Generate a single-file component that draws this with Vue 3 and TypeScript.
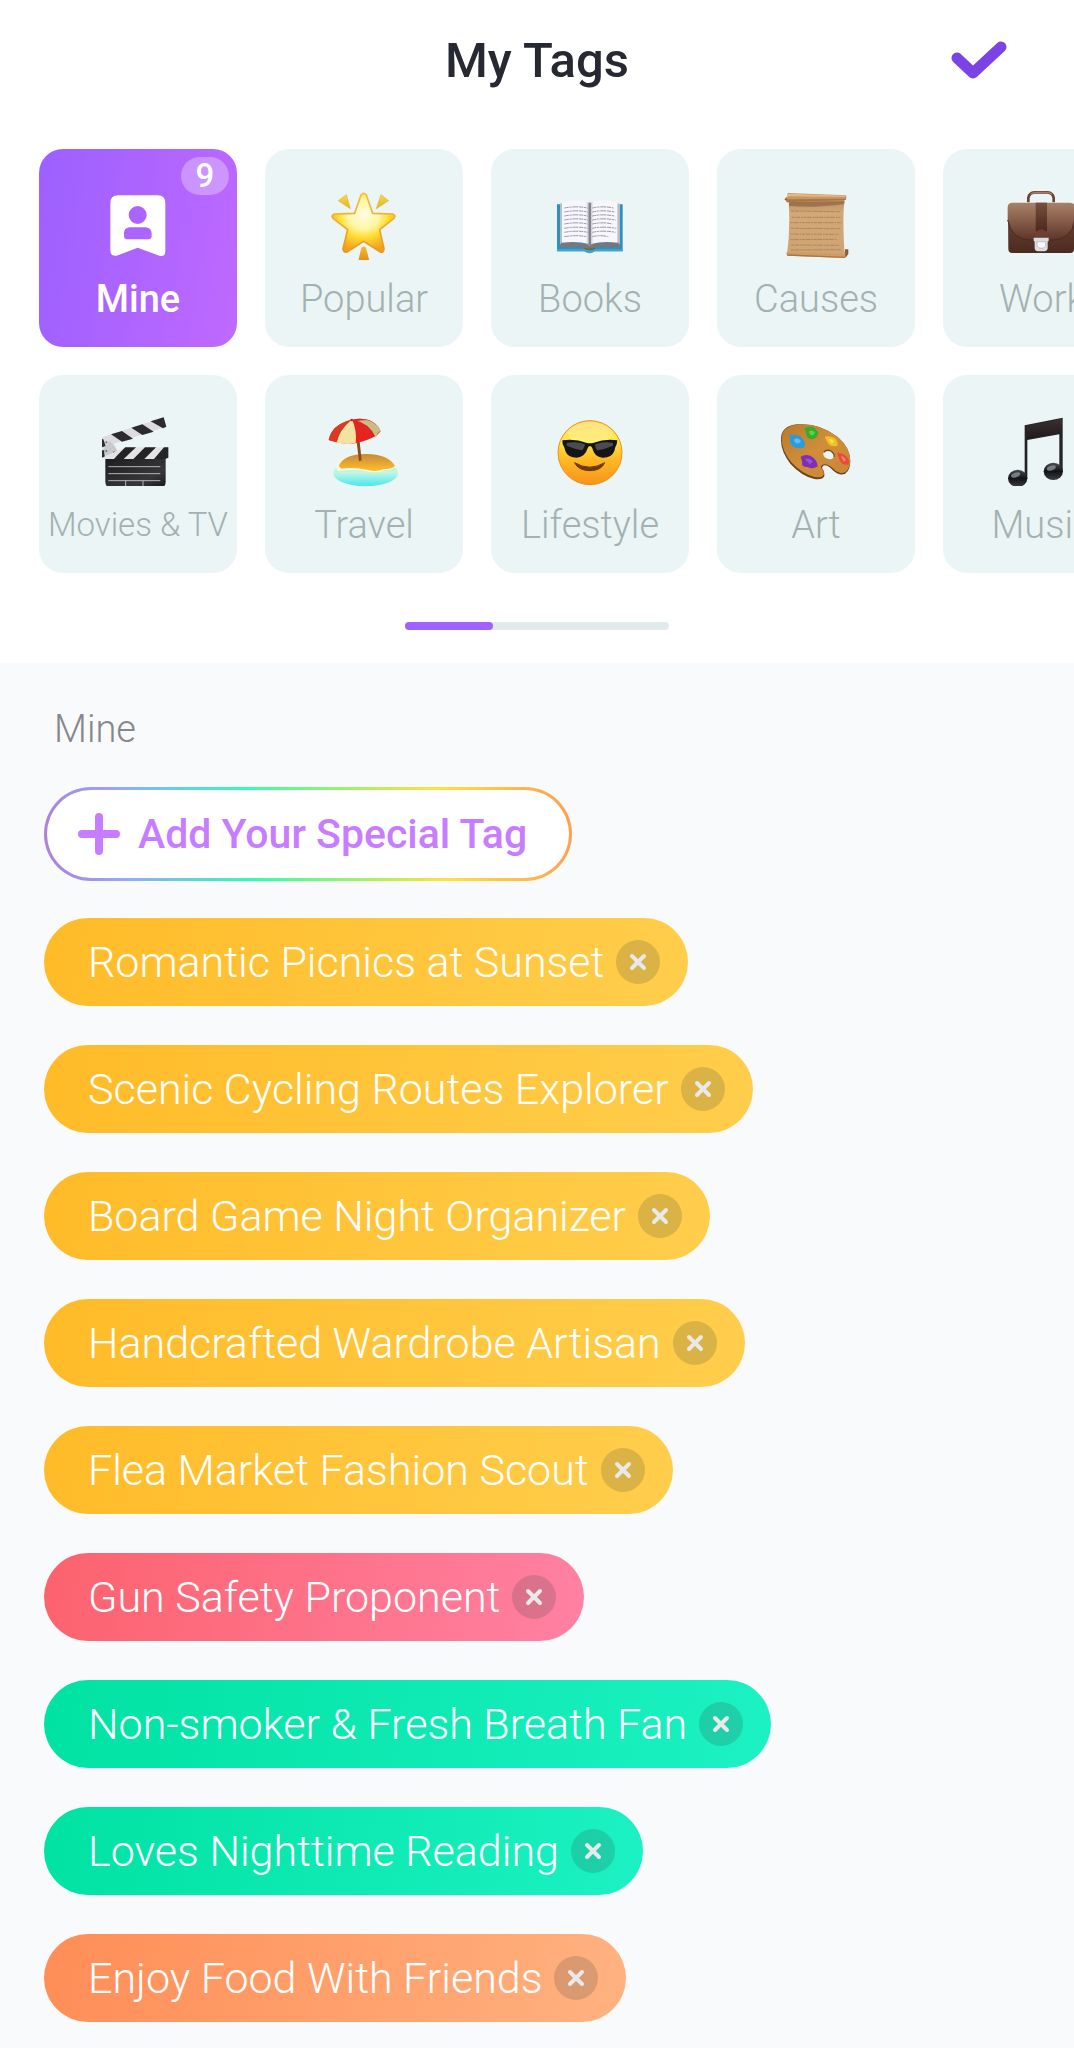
<script setup lang="ts">
import { computed, ref } from 'vue'

interface Category {
  id: string
  label: string
  viewBox: string
  compact?: boolean
}

interface Tag {
  text: string
  tone: 'yellow' | 'pink' | 'green' | 'orange'
}

// Listed column by column, as the two-row carousel fills them.
const categories: Category[] = [
  { id: 'mine', label: 'Mine', viewBox: '216 144 216 216' },
  { id: 'movies', label: 'Movies & TV', viewBox: '216 131 216 216', compact: true },
  { id: 'popular', label: 'Popular', viewBox: '203 144 216 216' },
  { id: 'travel', label: 'Travel', viewBox: '203 131 216 216' },
  { id: 'books', label: 'Books', viewBox: '221 144 216 216' },
  { id: 'lifestyle', label: 'Lifestyle', viewBox: '221 131 216 216' },
  { id: 'causes', label: 'Causes', viewBox: '209 144 216 216' },
  { id: 'art', label: 'Art', viewBox: '209 131 216 216' },
  { id: 'work', label: 'Work', viewBox: '886 144 216 216' },
  { id: 'music', label: 'Music', viewBox: '886 131 216 216' },
]

const active = ref('mine')
const activeLabel = computed(() => categories.find((c) => c.id === active.value)?.label)

const tags = ref<Tag[]>([
  { text: 'Romantic Picnics at Sunset', tone: 'yellow' },
  { text: 'Scenic Cycling Routes Explorer', tone: 'yellow' },
  { text: 'Board Game Night Organizer', tone: 'yellow' },
  { text: 'Handcrafted Wardrobe Artisan', tone: 'yellow' },
  { text: 'Flea Market Fashion Scout', tone: 'yellow' },
  { text: 'Gun Safety Proponent', tone: 'pink' },
  { text: 'Non-smoker & Fresh Breath Fan', tone: 'green' },
  { text: 'Loves Nighttime Reading', tone: 'green' },
  { text: 'Enjoy Food With Friends', tone: 'orange' },
])

function removeTag(index: number) {
  tags.value.splice(index, 1)
}
</script>

<template>
  <div class="page">
    <header class="header">
      <h1 class="title">My Tags</h1>
      <button class="confirm" type="button" aria-label="Done">
        <svg viewBox="0 0 56 40" aria-hidden="true">
          <path d="M6 17 L22 32 L50 6" fill="none" stroke="currentColor" stroke-width="11" stroke-linecap="round" stroke-linejoin="round" />
        </svg>
      </button>
    </header>

    <nav class="categories" aria-label="Tag categories">
      <button
        v-for="c in categories"
        :key="c.id"
        type="button"
        class="tile"
        :class="{ active: active === c.id }"
        @click="active = c.id"
      >
        <svg class="icon" :viewBox="c.viewBox" aria-hidden="true">
          <g v-if="c.id === 'mine'">
            <path
              fill="currentColor"
              fill-rule="evenodd"
              d="M264 166H383Q406 166 406 190V333Q406 352 388 347L323 323L260 347Q241 350 241 331V190Q241 166 264 166ZM323 198A27 27 0 1 0 323 252A27 27 0 1 0 323 198ZM298 262Q282 264 282 280V289Q282 298 291 298H356Q365 298 365 289V280Q364 264 348 262Z"
            />
          </g>

          <g v-else-if="c.id === 'popular'">
            <g fill="url(#rayTop)" stroke="#e3b62a" stroke-width="2" stroke-linejoin="round">
              <path d="M234 182L258 164L270 206Z" />
              <path d="M385 182L362 164L348 206Z" />
            </g>
            <path d="M303 323Q310 316 317 323L327 362H294Z" fill="url(#rayBottom)" />
            <path
              d="M302 165Q310 155 318 165L337 220L397 222Q408 226 401 235L358 269L371 326Q370 340 358 335L310 304L262 335Q249 340 248 326L262 269L218 235Q211 226 222 222L283 220Z"
              fill="url(#star)"
              stroke="url(#starEdge)"
              stroke-width="5"
              stroke-linejoin="round"
            />
          </g>

          <g v-else-if="c.id === 'books'">
            <path d="M230 193H427V334H344Q328 345 312 334H230Z" fill="#2f8fbd" />
            <path d="M230 327H427V334H344Q328 345 312 334H230Z" fill="#3fa4cf" />
            <path d="M312 321H344V327Q328 335 312 327Z" fill="#6b6b2c" />
            <path d="M239 312L246 304L328 312L411 304L419 312V322H346Q328 330 311 322H239Z" fill="#77777d" />
            <path d="M239 192L245 188V306L239 314ZM419 192L412 188V306L419 314Z" fill="#b9bcc4" />
            <path d="M245 188Q292 176 326 186V312Q290 302 245 308Z" fill="#f7f7fb" />
            <path d="M332 186Q366 176 412 188V308Q368 302 332 312Z" fill="#f7f7fb" />
            <path d="M316 183L328 190L340 183V311L328 318L316 311Z" fill="url(#bookFold)" />
            <path d="M325 188H332V316H325Z" fill="#83838c" />
            <g fill="none" stroke="#9a9aa8" stroke-width="3" stroke-dasharray="13 2 7 2 18 2">
              <path d="M252 204Q290 197 322 204M252 216Q290 209 322 216M252 228Q290 221 322 228M252 240Q290 233 322 240M252 252Q290 245 322 252M252 265Q290 258 322 265M252 277Q290 270 322 277M252 290Q290 284 318 290" />
              <path d="M336 204Q366 197 400 204M336 216Q366 209 404 216M336 228Q366 221 402 228M336 240Q366 233 406 240M336 252Q366 245 396 252M336 265Q366 258 408 265M336 277Q366 270 406 277M336 290Q360 284 384 290" />
            </g>
          </g>

          <g v-else-if="c.id === 'causes'">
            <path d="M235 180L403 176Q396 230 402 330L408 350L230 346Q240 270 235 180Z" fill="url(#parchment)" />
            <path d="M236 186L403 184L402 192Q310 205 236 198Z" fill="#7d5836" opacity=".55" />
            <g fill="none" stroke="#97704a" stroke-width="3" stroke-dasharray="9 2 14 3 5 2" opacity=".6">
              <path d="M242 213L388 215M244 232L390 232M240 248L394 248M242 265L390 266M240 282L384 283M240 299L380 298M242 315L386 316M242 330L392 329" />
            </g>
            <path d="M232 159L407 166Q411 172 407 179L230 187Q223 182 227 171L232 170Z" fill="#c9965f" />
            <path d="M232 161L407 167L406 171L231 169Z" fill="#e2b888" />
            <path d="M227 178L406 176L406 180L230 187Z" fill="#a97746" />
            <path d="M230 335L404 341L404 354L231 347Q226 342 230 335Z" fill="#cd9d69" />
            <path d="M230 343L404 350V354L231 347Z" fill="#a97746" />
            <path d="M404 328L414 328V342L405 354Z" fill="#8a5a30" />
            <circle cx="226" cy="178" r="3" fill="#8a5a30" />
          </g>

          <g v-else-if="c.id === 'work'">
            <path d="M953 187V174Q955 158 972 157H1010Q1027 158 1029 174V187" fill="none" stroke="#6b4234" stroke-width="8" />
            <path d="M960 163Q966 157 978 157H1006Q1018 157 1024 163" fill="none" stroke="#a77c67" stroke-width="4" />
            <path d="M892 230H1090V326Q1090 339 1079 339H905Q893 339 893 326Z" fill="url(#caseBody)" />
            <path d="M905 188H1078Q1092 188 1092 202V240Q1084 300 1020 301H966Q902 300 891 240V202Q891 188 905 188Z" fill="url(#caseFlap)" />
            <path d="M891 240Q902 300 966 301H1020Q1084 300 1092 240" fill="none" stroke="#4c2a20" stroke-width="3" />
            <path d="M975 188H1009V274H975Z" fill="url(#strap)" />
            <path d="M974 290Q976 268 992 268Q1008 268 1010 290Z" fill="#6e4032" />
            <path d="M969 293H1014V304H1011V325Q1010 334 1000 334H982Q973 334 972 325V304H969Z" fill="#dcdfe2" />
            <path d="M979 305H1005V318Q1003 325 992 325Q980 325 979 318Z" fill="#f7f8f9" stroke="#a9adb2" stroke-width="2" />
          </g>

          <g v-else-if="c.id === 'movies'">
            <path d="M209 203L401 141L409 169L240 224Q262 232 266 252V262H218V228Z" fill="#dcdcde" />
            <g fill="#2b2b2d">
              <path d="M243 192L276 182L309 205L276 214ZM304 172L337 162L371 184L337 194ZM362 153L401 141L409 169L399 174Z" />
              <path d="M207 203L220 207L227 227L217 231ZM216 240H224V262H216Z" />
            </g>
            <path d="M223 230L238 212Q256 222 263 246L236 256L223 252Z" fill="#c9cacd" />
            <circle cx="229" cy="242" r="3" fill="#6d6d70" />
            <circle cx="252" cy="246" r="3" fill="#6d6d70" />
            <circle cx="229" cy="216" r="3" fill="#6d6d70" />
            <path d="M226 262H407V334Q407 353 388 353H246Q226 353 226 334Z" fill="url(#slate)" />
            <path d="M216 262L286 231H415V262L406 266H226Z" fill="#e3e3e5" />
            <g fill="#242426">
              <path d="M262 255L286 231H318L281 266H252ZM345 231H378L343 266H310ZM402 231H415V262L406 266H372Z" />
            </g>
            <path d="M235 289H391M235 310H391M235 331H391M287 331V347M339 331V347" fill="none" stroke="#b5b5b8" stroke-width="3" />
          </g>

          <g v-else-if="c.id === 'travel'">
            <ellipse cx="316" cy="309" rx="97" ry="39" fill="url(#sea)" />
            <path d="M226 290Q236 250 318 250Q394 252 406 292Q390 300 372 299Q356 310 326 304Q290 294 232 302Z" fill="#fff8dc" />
            <path d="M235 287Q250 250 320 251Q386 252 404 288Q392 298 371 296Q350 306 322 299Q280 290 244 295Z" fill="url(#sand)" />
            <path d="M289 215L298 214L304 270L296 273Z" fill="#8a4b22" />
            <path d="M205 209Q214 164 270 149Q340 134 361 183L348 196Q330 207 286 219Q260 226 205 209Z" fill="#e2261f" />
            <path d="M272 150Q236 180 229 216Q252 224 286 219Q290 180 276 150Z" fill="#f6e2a0" />
            <path d="M282 149Q326 158 346 200L348 196Q352 186 361 181Q345 148 300 146Z" fill="#c9bd87" />
            <path d="M278 149Q300 141 322 150Q300 148 290 153Z" fill="#e2261f" />
            <path d="M205 209Q214 164 270 149Q236 180 229 216Z" fill="#d93a23" />
            <circle cx="274" cy="149" r="4" fill="#c9231c" />
          </g>

          <g v-else-if="c.id === 'lifestyle'">
            <circle cx="329" cy="247" r="96" fill="url(#face)" stroke="#ec8f1c" stroke-width="3" />
            <ellipse cx="329" cy="190" rx="66" ry="34" fill="#ffffff" opacity=".25" />
            <path d="M246 210Q286 205 317 217Q329 221 341 217Q372 205 411 210L409 222Q404 230 402 242Q394 263 366 262Q342 260 336 234Q333 227 329 227Q325 227 322 234Q314 260 290 262Q262 262 255 242Q253 230 247 222Z" fill="#151517" />
            <path d="M259 218Q288 212 314 222Q312 236 304 240Q284 236 259 226ZM398 218Q370 212 344 222Q345 236 352 240Q374 236 398 226Z" fill="#6f7276" opacity=".6" />
            <path d="M283 277Q328 304 373 277Q364 300 329 301Q293 300 283 277Z" fill="#6d3a0d" stroke="#6d3a0d" stroke-width="3" stroke-linejoin="round" />
          </g>

          <g v-else-if="c.id === 'art'">
            <path d="M212 210Q210 166 262 162Q330 158 382 200Q420 232 420 275Q416 318 388 312Q374 308 360 292Q340 278 335 292Q344 306 342 318Q336 330 312 326Q272 316 240 280Q212 244 212 210Z" fill="#6e421a" />
            <path d="M214 207Q214 166 266 162Q332 160 382 200Q421 234 420 270Q416 312 390 308Q376 304 362 289Q338 274 331 291Q342 302 340 313Q336 324 312 320Q274 310 243 276Q215 242 214 207Z" fill="url(#palette)" />
            <ellipse cx="355" cy="253" rx="17" ry="13" fill="#ebf5f6" transform="rotate(25 355 253)" />
            <path d="M340 246Q348 236 362 242Q374 252 371 260" fill="none" stroke="#7a4a1c" stroke-width="4" />
            <path d="M283 174Q294 166 312 172L324 186Q322 206 304 207Q290 206 288 192Z" fill="#34ad2c" />
            <path d="M296 184Q304 176 314 186Q310 198 300 194Z" fill="#5fd04a" />
            <path d="M236 193Q248 190 270 198Q288 214 283 230Q266 238 246 228Q236 216 240 206Z" fill="#2c9bd9" />
            <path d="M250 208Q262 200 272 212Q268 222 256 218Z" fill="#63bdec" />
            <path d="M343 200Q352 194 372 202Q384 212 381 226Q364 232 354 220Z" fill="#f1c21c" />
            <path d="M355 206Q366 204 372 214L364 220Z" fill="#f9dd5e" />
            <path d="M380 248Q398 246 412 262Q420 276 414 283Q398 286 389 272Z" fill="#ec4a3b" />
            <path d="M392 258Q402 258 407 270L400 274Z" fill="#f98175" />
            <path d="M271 260Q282 250 300 256Q322 268 322 288Q306 298 292 290Q270 290 276 276Z" fill="#7e2fb6" />
            <path d="M284 266Q298 260 308 274L298 282Z" fill="#9b50cf" />
          </g>

          <g v-else>
            <path d="M942 165L1056 142V300H1046V192L950 209V325H942Z" fill="#232326" />
            <path d="M944 167L1054 145V186L950 206Z" fill="url(#beam)" />
            <ellipse cx="921" cy="324" rx="29" ry="26" fill="url(#note)" />
            <ellipse cx="1028" cy="303" rx="29" ry="26" fill="url(#note)" />
            <ellipse cx="915" cy="314" rx="14" ry="7" fill="#9aa0a8" opacity=".7" transform="rotate(-20 915 314)" />
            <ellipse cx="1022" cy="293" rx="14" ry="7" fill="#9aa0a8" opacity=".7" transform="rotate(-20 1022 293)" />
          </g>
        </svg>
        <span class="label" :class="{ compact: c.compact }">{{ c.label }}</span>
        <span v-if="c.id === 'mine'" class="badge">{{ tags.length }}</span>
      </button>
    </nav>

    <div class="scroll-track" aria-hidden="true"><div class="scroll-thumb"></div></div>

    <main class="panel">
      <h2 class="section-title">{{ activeLabel }}</h2>
      <button class="add" type="button">
        <svg viewBox="0 0 42 42" aria-hidden="true">
          <path d="M21 4V38M4 21H38" fill="none" stroke="currentColor" stroke-width="8" stroke-linecap="round" />
        </svg>
        <span>Add Your Special Tag</span>
      </button>
      <ul class="tags">
        <li v-for="(tag, i) in tags" :key="tag.text" class="tag" :class="tag.tone">
          <span>{{ tag.text }}</span>
          <button class="remove" type="button" :aria-label="'Remove ' + tag.text" @click="removeTag(i)">
            <svg viewBox="0 0 44 44" aria-hidden="true">
              <path d="M16 16L28 28M28 16L16 28" fill="none" stroke="#e9e9e9" stroke-width="4" stroke-linecap="round" />
            </svg>
          </button>
        </li>
      </ul>
    </main>

    <svg class="defs" width="0" height="0" aria-hidden="true">
      <defs>
        <radialGradient id="star" cx=".5" cy=".36" r=".62">
          <stop offset="0" stop-color="#fffce0" />
          <stop offset=".4" stop-color="#fff6a6" />
          <stop offset=".62" stop-color="#ffdf35" />
          <stop offset="1" stop-color="#f2a01b" />
        </radialGradient>
        <linearGradient id="starEdge" x2="0" y2="1">
          <stop offset="0" stop-color="#efc03e" />
          <stop offset="1" stop-color="#e8971c" />
        </linearGradient>
        <linearGradient id="rayTop" x2="0" y2="1">
          <stop offset="0" stop-color="#f4da55" />
          <stop offset="1" stop-color="#e6b221" />
        </linearGradient>
        <linearGradient id="rayBottom" x2="0" y2="1">
          <stop offset="0" stop-color="#f6bd2f" />
          <stop offset="1" stop-color="#e48d12" />
        </linearGradient>
        <linearGradient id="bookFold">
          <stop offset="0" stop-color="#c4c4cc" stop-opacity="0" />
          <stop offset=".5" stop-color="#a2a2ab" />
          <stop offset="1" stop-color="#c4c4cc" stop-opacity="0" />
        </linearGradient>
        <linearGradient id="parchment" x2="0" y2="1">
          <stop offset="0" stop-color="#b98d60" />
          <stop offset=".25" stop-color="#d2a878" />
          <stop offset="1" stop-color="#cfa473" />
        </linearGradient>
        <linearGradient id="caseBody" x2="0" y2="1">
          <stop offset="0" stop-color="#6a4032" />
          <stop offset="1" stop-color="#4c2a20" />
        </linearGradient>
        <linearGradient id="caseFlap" x2="0" y2="1">
          <stop offset="0" stop-color="#a98169" />
          <stop offset=".5" stop-color="#855b48" />
          <stop offset="1" stop-color="#5b3529" />
        </linearGradient>
        <linearGradient id="strap" x2="0" y2="1">
          <stop offset="0" stop-color="#76503d" />
          <stop offset="1" stop-color="#4b281e" />
        </linearGradient>
        <linearGradient id="slate" x2="1" y2="1">
          <stop offset="0" stop-color="#1d1d1f" />
          <stop offset=".7" stop-color="#37373a" />
          <stop offset="1" stop-color="#18181a" />
        </linearGradient>
        <linearGradient id="sea" x2="0" y2="1">
          <stop offset="0" stop-color="#7fdfe6" />
          <stop offset=".45" stop-color="#c6f7e2" />
          <stop offset="1" stop-color="#45e6f0" />
        </linearGradient>
        <linearGradient id="sand" x2="0" y2="1">
          <stop offset="0" stop-color="#c58a3a" />
          <stop offset="1" stop-color="#ffbf2c" />
        </linearGradient>
        <linearGradient id="face" x2="0" y2="1">
          <stop offset="0" stop-color="#ffd95a" />
          <stop offset=".3" stop-color="#ffe94a" />
          <stop offset=".6" stop-color="#ffba24" />
          <stop offset="1" stop-color="#f8931a" />
        </linearGradient>
        <linearGradient id="palette" x2="1" y2="1">
          <stop offset="0" stop-color="#b87a2c" />
          <stop offset=".5" stop-color="#d08e3a" />
          <stop offset="1" stop-color="#c98534" />
        </linearGradient>
        <linearGradient id="beam" x2="0" y2="1">
          <stop offset="0" stop-color="#3a3031" />
          <stop offset="1" stop-color="#1f191a" />
        </linearGradient>
        <linearGradient id="note" x2="0" y2="1">
          <stop offset="0" stop-color="#4a4f55" />
          <stop offset=".5" stop-color="#121315" />
          <stop offset="1" stop-color="#3a3e43" />
        </linearGradient>
      </defs>
    </svg>
  </div>
</template>

<style>
body {
  margin: 0;
  background: #f9fafc;
}
</style>

<style scoped>
.page {
  font-family: Roboto, Inter, sans-serif;
  font-weight: 300;
  background: #fff;
}

button {
  font: inherit;
  border: 0;
  padding: 0;
  cursor: pointer;
}

.header {
  display: grid;
  grid-template-columns: 1fr auto 1fr;
  align-items: center;
  height: 118px;
  padding: 2px 67px 0;
}

.title {
  grid-column: 2;
  margin: 0;
  font-size: 49px;
  line-height: 60px;
  font-weight: 500;
  color: #272932;
}

.confirm {
  justify-self: end;
  width: 56px;
  height: 40px;
  background: none;
  color: #7b42e5;
}

.confirm svg,
.remove svg {
  display: block;
  width: 100%;
  height: 100%;
}

.categories {
  display: grid;
  grid-auto-flow: column;
  grid-template-rows: repeat(2, 198px);
  grid-auto-columns: 198px;
  gap: 28px;
  padding: 29px 39px 0;
  overflow-x: auto;
  scrollbar-width: none;
}

.tile {
  position: relative;
  display: flex;
  flex-direction: column;
  align-items: center;
  gap: 15px;
  padding-top: 39px;
  border-radius: 24px;
  background: #ebf5f6;
  color: #a3b1b0;
}

.tile.active {
  background: linear-gradient(100deg, #9c60ff, #bf69ff);
  color: #fff;
  font-weight: 500;
}

.icon {
  width: 72px;
  height: 72px;
}

.label {
  font-size: 38px;
  line-height: 48px;
  white-space: nowrap;
}

.label.compact {
  font-size: 33px;
}

.badge {
  position: absolute;
  top: 8px;
  right: 8px;
  width: 48px;
  border-radius: 19px;
  background: rgba(255, 255, 255, 0.3);
  font-size: 33px;
  line-height: 38px;
  font-weight: 500;
}

.scroll-track {
  width: 264px;
  height: 8px;
  margin: 49px auto 33px;
  border-radius: 4px;
  background: #e1ebec;
}

.scroll-thumb {
  width: 33.333%;
  height: 100%;
  border-radius: 4px;
  background: #9f62ff;
}

.panel {
  padding: 42px 44px 24px;
  background: #f9fafc;
}

.section-title {
  margin: 0 10px 34px;
  font-size: 38px;
  line-height: 48px;
  font-weight: 300;
  color: #87888b;
}

.add {
  display: flex;
  align-items: center;
  gap: 18px;
  height: 94px;
  padding: 0 42px 0 31px;
  border: 3px solid transparent;
  border-radius: 47px;
  background:
    linear-gradient(#fff, #fff) padding-box,
    linear-gradient(84deg, #b07fd8 0%, #95a8ff 16%, #2effb0 39%, #96f46a 57%, #ffe23a 75%, #ffab50 95%, #ff9c52 100%) border-box;
  color: #c77dff;
  font-size: 41px;
  line-height: 48px;
  font-weight: 500;
  white-space: nowrap;
}

.add svg {
  width: 42px;
  height: 42px;
}

.tags {
  display: flex;
  flex-direction: column;
  align-items: flex-start;
  gap: 39px;
  margin: 37px 0 0;
  padding: 0;
  list-style: none;
}

.tag {
  display: flex;
  align-items: center;
  gap: 12px;
  height: 88px;
  padding: 0 28px 0 44px;
  border-radius: 44px;
  color: #fff;
  font-size: 43px;
  line-height: 56px;
  white-space: nowrap;
}

.remove {
  width: 44px;
  height: 44px;
  border-radius: 50%;
  background: rgba(50, 60, 60, 0.18);
}

.yellow {
  background: linear-gradient(100deg, #ffbb28, #ffce4c);
}

.pink {
  background: linear-gradient(100deg, #fc626d, #ff81a3);
}

.green {
  background: linear-gradient(100deg, #00e2a2, #1cf1c3);
}

.orange {
  background: linear-gradient(100deg, #ff8d57, #ffb280);
}

.defs {
  position: absolute;
}
</style>
